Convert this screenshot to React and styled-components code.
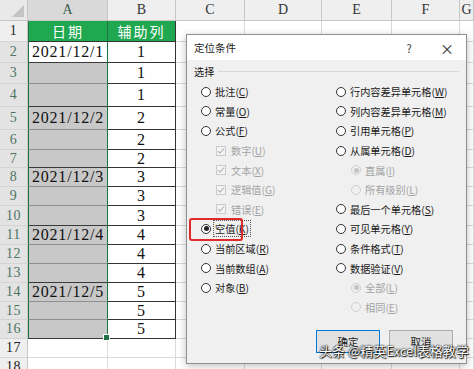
import React from "react";
import styled, { createGlobalStyle, css } from "styled-components";

const GlobalStyle = createGlobalStyle`
    html, body {
        margin: 0;
        padding: 0;
        background: #ffffff;
        overflow: hidden;
    }
    body {
        width: 474px;
        height: 369px;
        font-family: "Liberation Serif", serif;
    }
`;

const CJK = `"Noto Sans CJK SC", "Noto Sans", sans-serif`;

const Screen = styled.div`
    position: relative;
    width: 474px;
    height: 369px;
    overflow: hidden;
`;

const Sheet = styled.div`
    display: grid;
    grid-template-columns: 28px 80px 68px 69px 77px 70px 68px 14px;
    grid-template-rows: ${(p) => p.$rows};
`;

const Corner = styled.div`
    position: relative;
    background: #e9e9e9;
    border-right: 1px solid #c6c6c6;
    border-bottom: 1px solid #c6c6c6;
    box-sizing: border-box;

    &::after {
        content: "";
        position: absolute;
        right: 3px;
        bottom: 3px;
        width: 12px;
        height: 12px;
        background: #c4c4c4;
        clip-path: polygon(100% 0, 100% 100%, 0 100%);
    }
`;

const ColHead = styled.div`
    display: flex;
    align-items: center;
    justify-content: center;
    box-sizing: border-box;
    background: ${(p) => (p.$selected ? "#d9d9d9" : "#efefef")};
    border-right: 1px solid #c6c6c6;
    border-bottom: 1px solid #c6c6c6;
    color: ${(p) => (p.$selected ? "#3b5e4c" : "#333")};
    font-family: "Liberation Serif", serif;
    font-size: 14px;
`;

const RowHead = styled.div`
    display: flex;
    align-items: center;
    justify-content: center;
    box-sizing: border-box;
    background: ${(p) => (p.$selected ? "#e3e3e3" : "#efefef")};
    border-right: 1px solid #c6c6c6;
    border-bottom: 1px solid #d4d4d4;
    color: ${(p) => (p.$selected ? "#4e7462" : "#222")};
    font-family: "Liberation Serif", serif;
    font-size: 14px;
    letter-spacing: 0.5px;
`;

const Cell = styled.div`
    position: relative;
    display: flex;
    align-items: center;
    justify-content: center;
    box-sizing: border-box;
    background: #fff;
    border-right: 1px solid #dadada;
    border-bottom: 1px solid #dadada;
    color: #111;
    font-family: "Liberation Serif", serif;
    font-size: 16px;
    letter-spacing: 0.8px;
    white-space: nowrap;

    ${(p) =>
        p.$table &&
        css`
            border-right-color: #333;
            border-bottom-color: #333;
        `}

    ${(p) =>
        p.$colA &&
        css`
            border-left: 1px solid #217346;
            border-right: 1px solid #217346;
            background: ${p.$active ? "#fff" : "#c8c8c8"};
            border-bottom-color: ${p.$strong ? "#3a3a3a" : "#8e8e8e"};
        `}

    ${(p) =>
        p.$head &&
        css`
            background: #1fa84f;
            color: #fff;
            font-family: ${CJK};
            font-size: 14px;
            letter-spacing: 2px;
            border-bottom-color: #333;
        `}
`;

const FillHandle = styled.span`
    position: absolute;
    right: -3px;
    bottom: -3px;
    width: 5px;
    height: 5px;
    background: #217346;
    border: 1px solid #fff;
    z-index: 2;
`;

const Dialog = styled.div`
    position: absolute;
    left: 186px;
    top: 34px;
    width: 281px;
    height: 330px;
    box-sizing: border-box;
    background: #f0f0f0;
    border: 1px solid #8f8f8f;
    box-shadow: 0 2px 8px rgba(0, 0, 0, 0.25);
    font-family: ${CJK};
    font-size: 10.2px;
    color: #1a1a1a;
    display: flex;
    flex-direction: column;
`;

const TitleBar = styled.div`
    height: 25px;
    display: flex;
    align-items: center;
    padding: 0 0 0 7px;
    background: #fff;
    font-size: 10.5px;
`;

const TitleText = styled.span`
    flex: 1;
`;

const TitleButton = styled.span`
    width: 38px;
    text-align: center;
    color: #333;
    font-size: ${(p) => p.$size || "11px"};
`;

const Body = styled.div`
    padding: 4px 7px 0 7px;
    display: flex;
    flex-direction: column;
`;

const GroupLabel = styled.div`
    display: flex;
    align-items: center;
    gap: 4px;
    height: 14px;

    &::after {
        content: "";
        flex: 1;
        height: 1px;
        background: #d8d8d8;
    }
`;

const Options = styled.div`
    display: grid;
    grid-template-columns: 135px 1fr;
    padding: 4px 0 0 7px;
`;

const Column = styled.div`
    display: flex;
    flex-direction: column;
`;

const Option = styled.div`
    position: relative;
    height: 19.6px;
    display: flex;
    align-items: center;
    gap: 3px;
    padding-left: ${(p) => (p.$indent ? "15px" : "0")};
    color: ${(p) => (p.$disabled ? "#a3a3a3" : "#1a1a1a")};

    ${(p) =>
        p.$highlight &&
        css`
            &::after {
                content: "";
                position: absolute;
                left: -12px;
                top: -1px;
                width: 54px;
                height: 23px;
                box-sizing: border-box;
                border: 2px solid #e02a2a;
                border-radius: 3px;
            }
        `}
`;

const Radio = styled.span`
    width: 10px;
    height: 10px;
    box-sizing: border-box;
    border-radius: 50%;
    border: 1px solid ${(p) => (p.$disabled ? "#cfcfcf" : "#333")};
    background: ${(p) => (p.$disabled ? "#f0f0f0" : "#fff")};
    display: flex;
    align-items: center;
    justify-content: center;

    &::before {
        content: "";
        display: ${(p) => (p.$checked ? "block" : "none")};
        width: 5px;
        height: 5px;
        border-radius: 50%;
        background: ${(p) => (p.$disabled ? "#c4c4c4" : "#222")};
    }
`;

const Check = styled.span`
    width: 10px;
    height: 10px;
    box-sizing: border-box;
    border: 1px solid #cacaca;
    background: #f4f4f4;
    display: flex;
    margin-right: 1px;

    svg {
        width: 8px;
        height: 8px;
    }
`;

const Label = styled.span`
    white-space: nowrap;
    padding: 0 1px;
    ${(p) =>
        p.$focus &&
        css`
            outline: 1px dotted #555;
            outline-offset: 0;
        `}
`;

const Footer = styled.div`
    display: flex;
    justify-content: flex-end;
    gap: 9px;
    padding: 13px 6px 0 0;
`;

const Button = styled.button`
    width: 64px;
    height: 23px;
    box-sizing: border-box;
    background: #e1e1e1;
    border: 1px solid ${(p) => (p.$primary ? "#0078d7" : "#adadad")};
    font-family: ${CJK};
    font-size: 10.5px;
    color: #1a1a1a;
    padding: 0;
`;

const Watermark = styled.div`
    position: absolute;
    left: 319px;
    top: 341px;
    font-family: ${CJK};
    font-size: 13px;
    color: #fff;
    white-space: nowrap;
    text-shadow: 0 0 2px #000, 0 0 1px #000, 1px 1px 1px #222;
`;

const rowHeights = [21, 21, 21, 23, 23, 20, 18, 19, 19, 20, 19, 19, 19, 19, 18, 19, 19, 19];
const columns = ["A", "B", "C", "D", "E", "F", "G"];
const dates = { 2: "2021/12/1", 5: "2021/12/2", 8: "2021/12/3", 11: "2021/12/4", 14: "2021/12/5" };

const leftOptions = [
    { label: "批注", key: "C" },
    { label: "常量", key: "O" },
    { label: "公式", key: "F" },
    { label: "数字", key: "U", check: true },
    { label: "文本", key: "X", check: true },
    { label: "逻辑值", key: "G", check: true },
    { label: "错误", key: "E", check: true },
    { label: "空值", key: "K", checked: true, highlight: true },
    { label: "当前区域", key: "R" },
    { label: "当前数组", key: "A" },
    { label: "对象", key: "B" },
];

const rightOptions = [
    { label: "行内容差异单元格", key: "W" },
    { label: "列内容差异单元格", key: "M" },
    { label: "引用单元格", key: "P" },
    { label: "从属单元格", key: "D" },
    { label: "直属", key: "I", sub: true, checked: true },
    { label: "所有级别", key: "L", sub: true },
    { label: "最后一个单元格", key: "S" },
    { label: "可见单元格", key: "Y" },
    { label: "条件格式", key: "T" },
    { label: "数据验证", key: "V" },
    { label: "全部", key: "L", sub: true, checked: true },
    { label: "相同", key: "E", sub: true },
];

const CheckMark = () => (
    <svg viewBox="0 0 8 8">
        <polyline points="1,4.2 3,6.2 7,1.6" fill="none" stroke="#b8b8b8" strokeWidth="1.2" />
    </svg>
);

const OptionRow = ({ item }) => {
    const disabled = item.check || item.sub;
    return (
        <Option $indent={disabled} $disabled={disabled} $highlight={item.highlight}>
            {item.check ? (
                <Check>
                    <CheckMark />
                </Check>
            ) : (
                <Radio $checked={item.checked} $disabled={item.sub} />
            )}
            <Label $focus={item.highlight}>
                {item.label}(<u>{item.key}</u>)
            </Label>
        </Option>
    );
};

const renderRow = (r) => {
    const selected = r >= 2 && r <= 16;
    const cells = [<RowHead key={`h${r}`} $selected={selected}>{r}</RowHead>];

    if (r === 1) {
        cells.push(<Cell key="a1" $table $colA $head>日期</Cell>);
        cells.push(<Cell key="b1" $table $head>辅助列</Cell>);
    } else if (r <= 16) {
        const strong = r === 2 || (r - 1) % 3 === 0;
        cells.push(
            <Cell key={`a${r}`} $table $colA $active={r === 2} $strong={strong}>
                {dates[r] || ""}
                {r === 16 && <FillHandle />}
            </Cell>
        );
        cells.push(<Cell key={`b${r}`} $table>{Math.floor((r - 2) / 3) + 1}</Cell>);
    } else {
        cells.push(<Cell key={`a${r}`} />);
        cells.push(<Cell key={`b${r}`} />);
    }

    for (let c = 2; c < columns.length; c++) {
        cells.push(<Cell key={`${columns[c]}${r}`} />);
    }
    return cells;
};

const App = () => {
    const rows = ["21px", ...rowHeights.map((h) => `${h}px`)].join(" ");
    const rowNumbers = rowHeights.map((_, i) => i + 1);

    return (
        <Screen>
            <GlobalStyle />
            <Sheet $rows={rows}>
                <Corner />
                {columns.map((c) => (
                    <ColHead key={c} $selected={c === "A"}>{c}</ColHead>
                ))}
                {rowNumbers.map(renderRow)}
            </Sheet>

            <Dialog>
                <TitleBar>
                    <TitleText>定位条件</TitleText>
                    <TitleButton>?</TitleButton>
                    <TitleButton $size="14px">×</TitleButton>
                </TitleBar>
                <Body>
                    <GroupLabel>选择</GroupLabel>
                    <Options>
                        <Column>
                            {leftOptions.map((o) => (
                                <OptionRow key={o.label} item={o} />
                            ))}
                        </Column>
                        <Column>
                            {rightOptions.map((o) => (
                                <OptionRow key={o.label} item={o} />
                            ))}
                        </Column>
                    </Options>
                    <Footer>
                        <Button $primary>确定</Button>
                        <Button>取消</Button>
                    </Footer>
                </Body>
            </Dialog>

            <Watermark>头条 @精英Excel表格教学</Watermark>
        </Screen>
    );
};

export default App;
